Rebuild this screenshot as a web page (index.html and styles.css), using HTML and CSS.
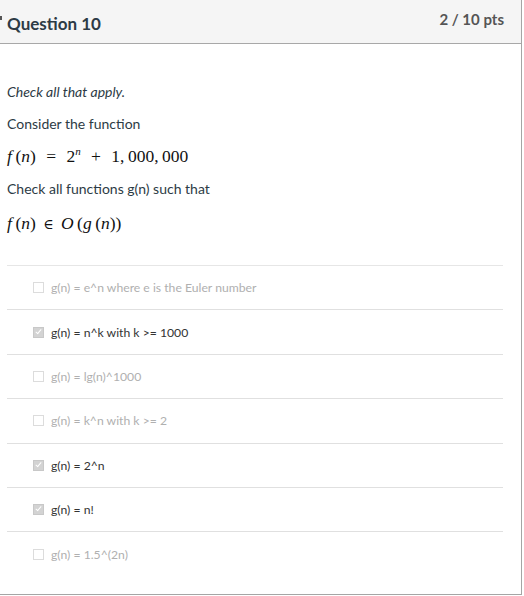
FILE: index.html
```html
<!DOCTYPE html>
<html lang="en">
<head>
    <meta charset="UTF-8">
    <title>Question 10</title>
    <link rel="stylesheet" href="styles.css">
</head>
<body>
    <div class="question">
        <div class="header">
            <span class="flag"></span>
            <h2 class="title">Question 10</h2>
            <span class="points">2 / 10 pts</span>
        </div>

        <div class="text">
            <p class="hint">Check all that apply.</p>
            <p>Consider the function</p>
            <p class="math">
                <i>f</i><span class="m">&thinsp;(</span><i>n</i><span class="m">)</span>
                <span class="op">=</span>
                <span class="m">2</span><sup><i>n</i></sup>
                <span class="op">+</span>
                <span class="m">1,&thinsp;000,&thinsp;000</span>
            </p>
            <p>Check all functions g(n) such that</p>
            <p class="math second">
                <i>f</i><span class="m">&thinsp;(</span><i>n</i><span class="m">)</span>
                <span class="op small">&isin;</span>
                <i>O</i><span class="m">&thinsp;(</span><i>g</i><span class="m">&thinsp;(</span><i>n</i><span class="m">))</span>
            </p>
        </div>

        <div class="answers">
            <div class="answer"><span class="box"></span>g(n) = e^n where e is the Euler number</div>
            <div class="answer picked"><span class="box"></span>g(n) = n^k with k &gt;= 1000</div>
            <div class="answer"><span class="box"></span>g(n) = lg(n)^1000</div>
            <div class="answer"><span class="box"></span>g(n) = k^n with k &gt;= 2</div>
            <div class="answer picked"><span class="box"></span>g(n) = 2^n</div>
            <div class="answer picked"><span class="box"></span>g(n) = n!</div>
            <div class="answer"><span class="box"></span>g(n) = 1.5^(2n)</div>
        </div>
    </div>
</body>
</html>
```

FILE: styles.css
```css
body { margin: 0; background: #fff; font-family: Lato, "Open Sans", sans-serif; color: #2d3b45; }

.question {
    width: 521px;
    height: 594px;
    border-right: 1px solid #a5a5a5;
    border-bottom: 1px solid #a5a5a5;
}

.header {
    position: relative;
    display: flex;
    justify-content: space-between;
    align-items: flex-start;
    height: 43px;
    background: #f5f5f5;
    border-bottom: 1px solid #a8a8a8;
}
.flag {
    position: absolute;
    left: 0;
    top: 16px;
    width: 2px;
    height: 4px;
    background: #555;
}
.title {
    margin: 0;
    padding: 13px 0 0 7px;
    font-size: 17px;
    font-weight: bold;
    color: #2d3b45;
}
.points {
    padding: 10px 17px 0 0;
    font-size: 15px;
    font-weight: bold;
    color: #555;
}

.text { padding: 39px 7px 0 7px; font-size: 14px; }
.text p { margin: 0 0 14px 0; line-height: 18px; }
.hint { font-style: italic; }

.math {
    font-family: "Liberation Serif", "DejaVu Serif", serif;
    font-size: 17.5px;
    color: #111;
    line-height: 20px;
    height: 19px;
}
.math.second { padding-top: 2px; }
.math i { font-style: italic; }
.math .op { margin: 0 6px; }
.math .op.small { margin: 0 3px; font-size: 14px; }
.math sup { font-size: 11px; line-height: 0; }

.answers { margin: 32px 18px 0 7px; border-top: 1px solid #e6e6e6; }
.answer {
    display: flex;
    align-items: center;
    height: 43.4px;
    padding-left: 26px;
    border-bottom: 1px solid #e0e0e0;
    font-size: 12.2px;
    color: #b0b0b0;
}
.answer:last-child { border-bottom: none; }
.answer.picked { color: #333; }

.box {
    width: 9px;
    height: 9px;
    margin-right: 7px;
    border: 1px solid #dcdcdc;
    background: #fff;
    position: relative;
}
.picked .box { background: #d3d3d3; border-color: #c8c8c8; }
.picked .box::after {
    content: "";
    position: absolute;
    left: 3px;
    top: 0px;
    width: 2px;
    height: 5px;
    border-right: 1.5px solid #fff;
    border-bottom: 1.5px solid #fff;
    transform: rotate(40deg);
}
```
